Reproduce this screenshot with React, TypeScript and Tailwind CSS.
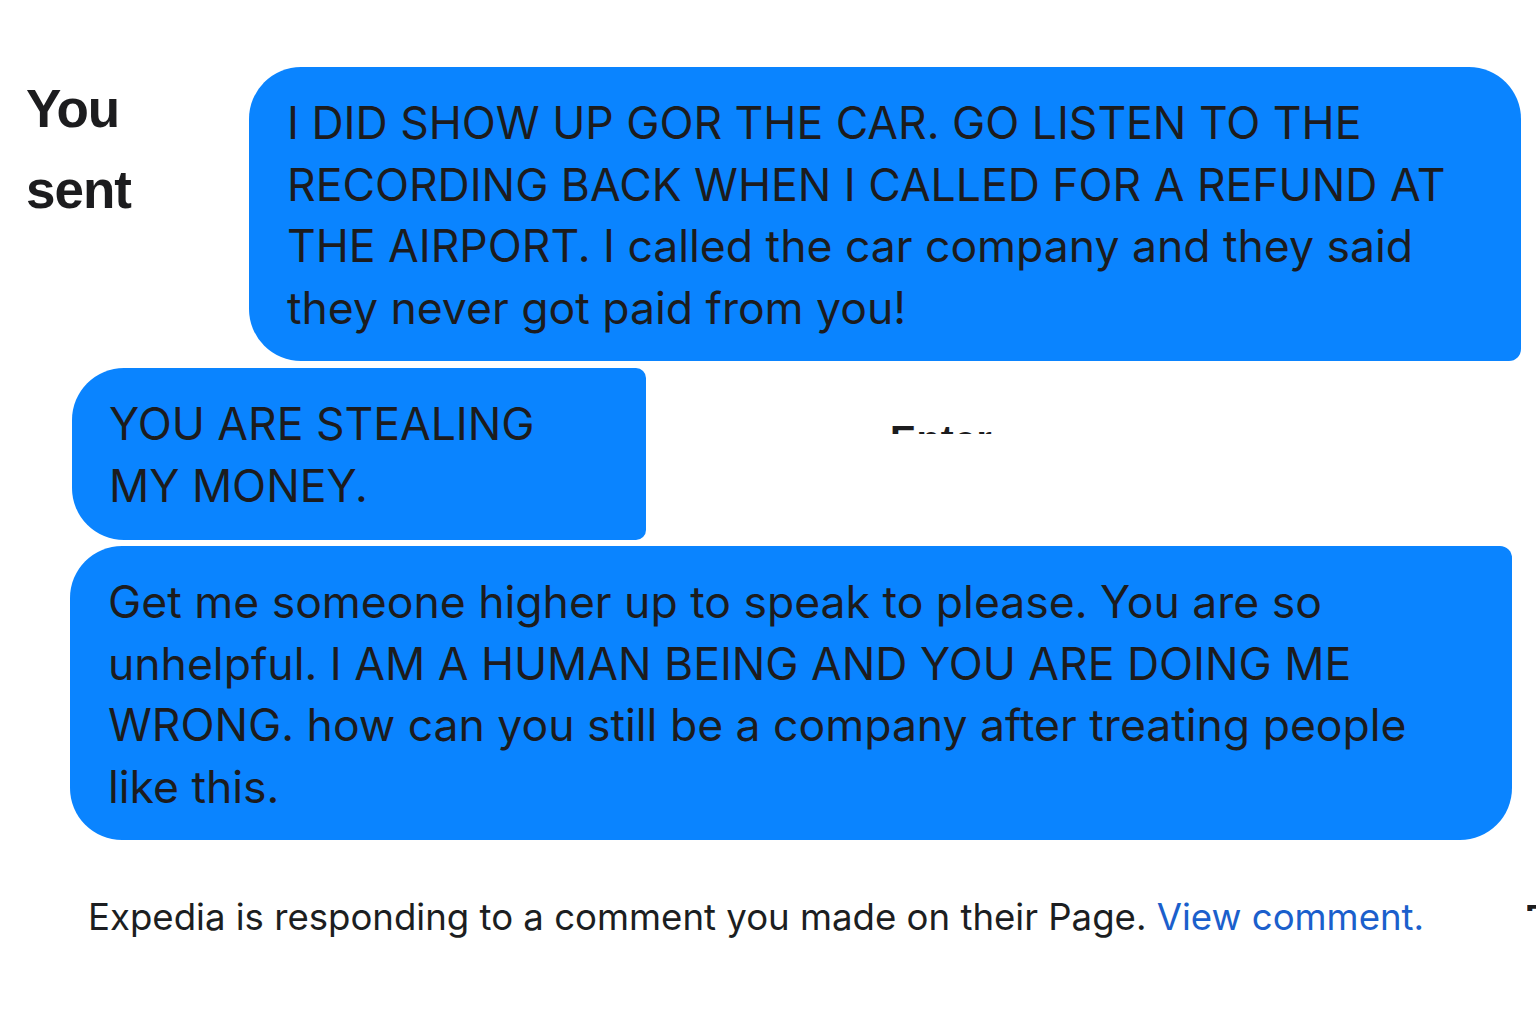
export default function App() {
  const bubbleText = "font-['Inter','Liberation_Sans',sans-serif] text-[44.5px] leading-[61.5px] text-[#1c1c1e]"
  return (
    <div className="min-h-screen w-[1536px] bg-white pt-[67px] font-['Liberation_Sans',Arial,sans-serif] overflow-hidden">
      <div className="flex">
        <div className="w-[249px] shrink-0 pl-[26px] pt-[1px] text-[53px] leading-[81px] font-bold text-[#1c1c1e] tracking-[-1px]">
          You
          <br />
          sent
        </div>
        <div className={`w-[1272px] rounded-[52px] rounded-br-[12px] bg-[#0a84ff] pl-[38px] pt-[26px] pb-[22px] ${bubbleText}`}>
          I DID SHOW UP GOR THE CAR. GO LISTEN TO THE
          <br />
          RECORDING BACK WHEN I CALLED FOR A REFUND AT
          <br />
          THE AIRPORT. I called the car company and they said
          <br />
          they never got paid from you!
        </div>
      </div>

      <div className="mt-[7px] flex">
        <div className={`ml-[72px] w-[574px] rounded-l-[52px] rounded-r-[10px] bg-[#0a84ff] pl-[37px] pt-[26px] pb-[23px] ${bubbleText}`}>
          YOU ARE STEALING
          <br />
          MY MONEY.
        </div>
        <div className="ml-[244px] mt-[57px] h-[9px] overflow-hidden">
          <div className="-mt-[5px] text-[39px] leading-[1] font-semibold text-[#1c1c1e] tracking-[0.5px]">Enter</div>
        </div>
      </div>

      <div className={`ml-[70px] mt-[6px] w-[1442px] rounded-[52px] rounded-tr-[12px] bg-[#0a84ff] pl-[38px] pt-[26px] pb-[22px] ${bubbleText}`}>
        Get me someone higher up to speak to please. You are so
        <br />
        unhelpful. I AM A HUMAN BEING AND YOU ARE DOING ME
        <br />
        WRONG. how can you still be a company after treating people
        <br />
        like this.
      </div>

      <div className="mt-[55px] flex items-start">
        <p className="ml-[88px] font-['Inter','Liberation_Sans',sans-serif] text-[36.6px] leading-[44px] text-[#1c1e21]">
          Expedia is responding to a comment you made on their Page.{' '}
          <span className="text-[#1b5fcc]">View comment.</span>
        </p>
        <div className="ml-auto mt-[8px] h-[8px] w-[9px] overflow-hidden">
          <div className="-ml-[2px] -mt-[4px] text-[34px] leading-[1] font-bold text-[#1c1c1e]">F</div>
        </div>
      </div>
    </div>
  )
}
